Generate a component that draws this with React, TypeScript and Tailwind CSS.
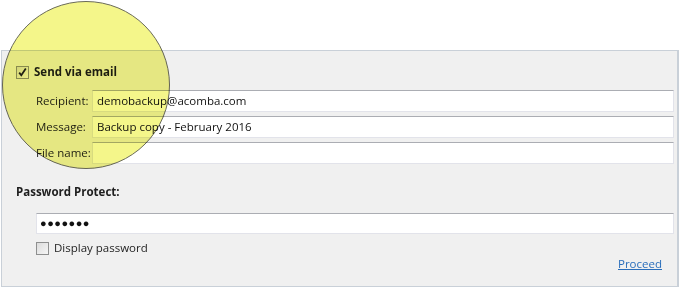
import React from "react";

const font = { fontFamily: '"Open Sans", "Noto Sans", Arial, sans-serif' };

function CheckBox({ checked = false }: { checked?: boolean }) {
  return (
    <span className="relative flex h-[13px] w-[13px] shrink-0 items-center justify-center border border-[#8e8f8f] bg-gradient-to-br from-[#dcdcdc] to-[#f6f6f6]">
      {checked && (
        <svg width="11" height="11" viewBox="0 0 11 11" className="absolute">
          <path d="M2.2 5.6 L4.3 8.2 L8.8 1.6" fill="none" stroke="#222" strokeWidth="1.8" />
        </svg>
      )}
    </span>
  );
}

type FieldProps = { label: string; value?: string };

function Field({ label, value = "" }: FieldProps) {
  return (
    <div className="flex items-center">
      <span className="w-[56px] shrink-0 whitespace-nowrap text-[11.5px] text-[#1e1e1e]">{label}</span>
      <div className="flex h-[22px] flex-1 items-center border border-[#e2e3ea] border-t-[#abadb3] bg-white pl-[4px] text-[11.5px] text-[#111]">
        {value}
      </div>
    </div>
  );
}

export default function App() {
  return (
    <div className="relative h-[289px] w-[680px] overflow-hidden bg-white" style={font}>
      <div className="ml-px mt-[50px] h-[237px] w-[678px] border border-[#c9d0d8] border-r-2 bg-[#f0f0f0]">
        <div className="pl-[14px] pr-[3px] pt-[14px]">
          <div className="flex h-[14px] items-center gap-[5px]">
            <CheckBox checked />
            <span className="text-[11.5px] font-bold text-[#1e1e1e]">Send via email</span>
          </div>

          <div className="mt-[11px] flex flex-col gap-[4px] pl-[20px]">
            <Field label="Recipient:" value="demobackup@acomba.com" />
            <Field label="Message:" value="Backup copy - February 2016" />
            <Field label="File name:" />
          </div>

          <div className="mt-[20px] flex h-[16px] items-center whitespace-nowrap text-[11.5px] font-bold text-[#1e1e1e]">
            Password Protect:
          </div>

          <div className="mt-[13px] pl-[20px]">
            <div className="flex h-[21px] items-center border border-[#e2e3ea] border-t-[#abadb3] bg-white pl-[3px] text-[11px] tracking-[0.5px] text-[#111]">
              ●●●●●●●
            </div>
          </div>

          <div className="mt-[7px] flex h-[14px] items-center gap-[5px] pl-[20px]">
            <CheckBox />
            <span className="text-[11.5px] text-[#1e1e1e]">Display password</span>
          </div>

          <div className="mt-[1px] flex h-[16px] items-center justify-end pr-[12px]">
            <span className="text-[11.5px] text-[#2a6ebb] underline">Proceed</span>
          </div>
        </div>
      </div>

      <div className="pointer-events-none absolute left-[2px] top-[1px] h-[168px] w-[168px] rounded-full border border-[#6a6a5a] bg-[#f4f68a] mix-blend-multiply" />
    </div>
  );
}
